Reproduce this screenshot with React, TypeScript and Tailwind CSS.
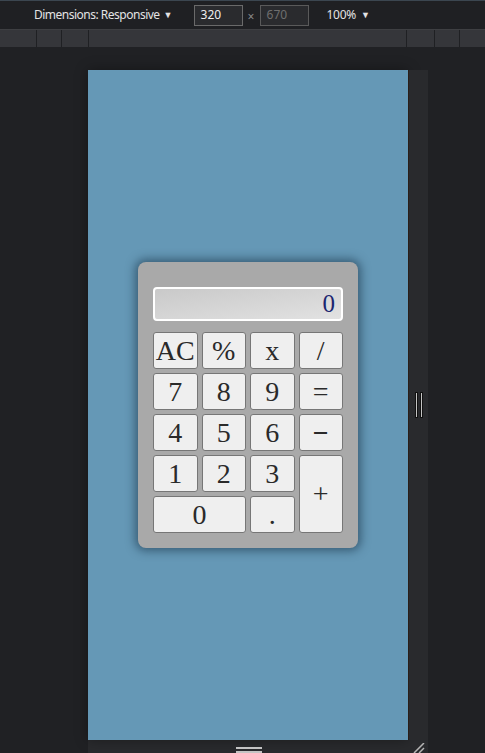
export default function App() {
  const face = { fontFamily: '"Liberation Serif", "Liberation Mono", serif' };

  const keys = [
    { label: 'AC', cls: '' },
    { label: '%', cls: '' },
    { label: 'x', cls: '' },
    { label: '/', cls: '' },
    { label: '7', cls: '' },
    { label: '8', cls: '' },
    { label: '9', cls: '' },
    { label: '=', cls: '' },
    { label: '4', cls: '' },
    { label: '5', cls: '' },
    { label: '6', cls: '' },
    { label: '−', cls: 'font-bold' },
    { label: '1', cls: '' },
    { label: '2', cls: '' },
    { label: '3', cls: '' },
    { label: '+', cls: 'row-span-2' },
    { label: '0', cls: 'col-span-2' },
    { label: '.', cls: '' },
  ];

  return (
    <div
      className="w-[485px] h-[753px] overflow-hidden bg-[#202124] flex flex-col"
      style={{ fontFamily: '"Noto Sans", "Open Sans", sans-serif' }}
    >
      {/* Device toolbar */}
      <div className="h-[30px] shrink-0 bg-[#1f2023] border-t border-[#3b4650] border-b border-b-[#3e3f42] flex items-center text-[12px] text-[#e3e3e3]">
        <span className="ml-[34px] tracking-[-0.5px]">Dimensions: Responsive</span>
        <span className="ml-[4px] text-[9px]">▼</span>
        <div className="ml-[21px] w-[49px] h-[21px] border border-[#6a6a6a] bg-[#2a2b2e] px-[6px] flex items-center text-[#f0f0f0]">320</div>
        <span className="w-[17px] text-center text-[#8a8a8a] text-[12px] mt-[3px]">×</span>
        <div className="w-[49px] h-[21px] border border-[#5a5a5a] bg-[#2a2b2e] px-[6px] flex items-center text-[#6f6f6f]">670</div>
        <span className="ml-[18px] tracking-[-0.3px]">100%</span>
        <span className="ml-[5px] text-[9px]">▼</span>
      </div>

      {/* Media query ruler */}
      <div className="h-[17px] shrink-0 bg-[#35363a] flex">
        <div className="w-[37px] border-r border-[#1f2023]" />
        <div className="w-[25px] border-r border-[#1f2023]" />
        <div className="w-[27px] border-r border-[#1f2023]" />
        <div className="w-[318px] border-r border-[#1f2023]" />
        <div className="w-[28px] border-r border-[#1f2023]" />
        <div className="w-[25px] border-r border-[#1f2023]" />
        <div className="flex-1" />
      </div>

      {/* Viewport area */}
      <div className="pl-[88px] pt-[23px]">
        <div className="flex">
          <div className="w-[320px] h-[670px] bg-[#6598b6] flex items-center justify-center shadow-[0_0_12px_rgba(0,0,0,0.35)]">
            {/* Calculator */}
            <div className="w-[220px] h-[286px] rounded-lg bg-[#a9a9a9] pt-[25px] px-[15px] pb-[16px] shadow-[0_0_10px_3px_rgba(20,45,65,0.55)]">
              <div
                className="h-[34px] rounded-[4px] border-2 border-white bg-gradient-to-br from-[#c9c9c9] to-[#e2e2e2] flex items-center justify-end pr-[6px] text-[25px] text-[#1b2670]"
                style={face}
              >
                0
              </div>
              <div className="mt-[11px] grid grid-cols-4 grid-rows-[repeat(5,37px)] gap-x-[4px] gap-y-[4px]" style={face}>
                {keys.map((k) => (
                  <button
                    key={k.label}
                    className={`${k.cls} bg-[#efefef] border border-[#767676] rounded-[3px] flex items-center justify-center text-[28px] leading-none text-[#2a2a2a]`}
                  >
                    {k.label}
                  </button>
                ))}
              </div>
            </div>
          </div>

          {/* Right resize bar */}
          <div className="w-[20px] h-[670px] bg-[#292a2d] border-l border-[#2a1e18] flex items-center justify-center gap-[2px]">
            <div className="w-[3px] h-[26px] bg-[#c4c4c4] border border-[#111]" />
            <div className="w-[3px] h-[26px] bg-[#c4c4c4] border border-[#111]" />
          </div>
        </div>

        {/* Bottom resize bar */}
        <div className="w-[340px] h-[13px] bg-[#292a2d] flex items-end">
          <div className="ml-[148px] w-[26px] h-[6px] flex flex-col justify-between">
            <div className="h-[2px] bg-[#c4c4c4]" />
            <div className="h-[2px] bg-[#c4c4c4]" />
          </div>
          <svg className="ml-auto mr-[3px]" width="13" height="10" viewBox="0 0 13 10">
            <line x1="2" y1="10" x2="12" y2="0" stroke="#b5b5b5" strokeWidth="1.5" />
            <line x1="7" y1="10" x2="12" y2="5" stroke="#b5b5b5" strokeWidth="1.5" />
          </svg>
        </div>
      </div>
    </div>
  );
}
